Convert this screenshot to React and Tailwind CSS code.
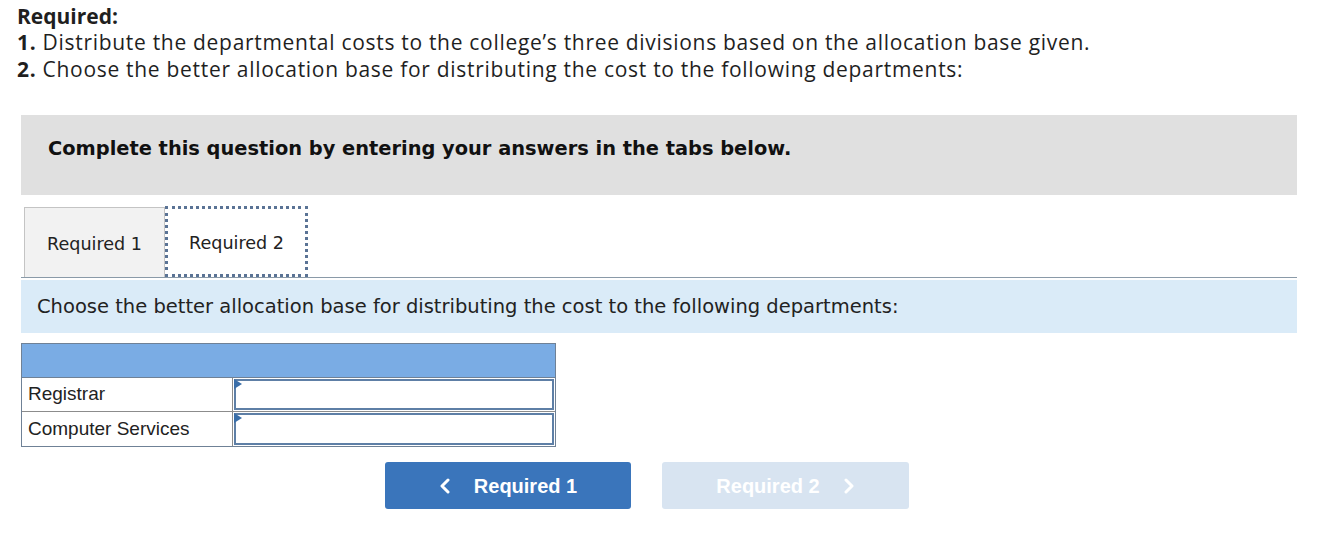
import React from 'react';

const verdana = { fontFamily: '"DejaVu Sans", Verdana, sans-serif' };

const Row = ({ label, last }) => (
  <div className={`flex h-[34px] ${last ? '' : 'border-b border-[#8c8c8c]'}`}>
    <div className="w-[211px] shrink-0 border-r border-[#8c8c8c] pl-[6px] flex items-center text-[19px] text-[#222] font-['Liberation_Sans',Arial,sans-serif]">
      {label}
    </div>
    <div className="relative flex-1 p-[1px]">
      <div className="h-full border-2 border-[#5e7fa6] bg-white" />
      <span className="absolute left-[1px] top-[1px] w-0 h-0 border-t-[5px] border-b-[5px] border-l-[8px] border-t-transparent border-b-transparent border-l-[#3a6ea8]" />
    </div>
  </div>
);

export default function App() {
  return (
    <div className="bg-white w-[1341px] h-[551px] overflow-hidden">
      <div className="pl-[17px] pt-[3px] text-[#1f1f1f] font-['Open_Sans',sans-serif] text-[21px] leading-[27px] tracking-[0.7px]">
        <p className="font-bold tracking-normal">Required:</p>
        <p className="-mt-[1px]"><span className="font-bold">1.</span> Distribute the departmental costs to the college’s three divisions based on the allocation base given.</p>
        <p><span className="font-bold">2.</span> Choose the better allocation base for distributing the cost to the following departments:</p>
      </div>

      <div className="ml-[21px] mr-[44px] mt-[32px]">
        <div className="h-[80px] bg-[#e0e0e0] pl-[27px] pt-[19px]" style={verdana}>
          <span className="font-bold text-[19.4px] text-[#111]">Complete this question by entering your answers in the tabs below.</span>
        </div>

        <div className="mt-[12px] flex border-b border-[#8a9aa8] h-[71px]" style={verdana}>
          <div className="ml-[3px] w-[141px] h-[70px] pt-[3px] bg-[#f2f2f2] border border-b-0 border-[#c4c4c4] flex items-center justify-center text-[17.6px] text-[#222]">
            Required 1
          </div>
          <div className="w-[143px] h-[71px] -mt-[1px] pt-[3px] bg-white border-[3px] border-dotted border-[#5a7395] flex items-center justify-center text-[17.6px] text-[#222]">
            Required 2
          </div>
        </div>

        <div className="mt-[2px] h-[53px] bg-[#daebf8] flex items-center pl-[16px] text-[19.5px] text-[#222]" style={verdana}>
          Choose the better allocation base for distributing the cost to the following departments:
        </div>

        <div className="mt-[10px] w-[535px] border border-[#6f8196]">
          <div className="h-[34px] bg-[#7aace4] border-b border-[#6f8196]" />
          <Row label="Registrar" />
          <Row label="Computer Services" last />
        </div>

        <div className="mt-[15px] flex gap-[31px] pl-[364px] font-['Liberation_Sans',Arial,sans-serif] font-bold text-[20px] text-white">
          <button className="w-[246px] h-[47px] rounded-[3px] bg-[#3a75bb] flex items-center justify-center gap-[23px]">
            <svg width="12" height="16" viewBox="0 0 12 16" fill="none" stroke="white" strokeWidth="3" strokeLinecap="round" strokeLinejoin="round"><path d="M9 2 L3 8 L9 14" /></svg>
            <span>Required 1</span>
          </button>
          <button className="w-[247px] h-[47px] rounded-[3px] bg-[#d8e4f1] flex items-center justify-center gap-[23px]">
            <span>Required 2</span>
            <svg width="12" height="16" viewBox="0 0 12 16" fill="none" stroke="white" strokeWidth="3" strokeLinecap="round" strokeLinejoin="round"><path d="M3 2 L9 8 L3 14" /></svg>
          </button>
        </div>
      </div>
    </div>
  );
}
